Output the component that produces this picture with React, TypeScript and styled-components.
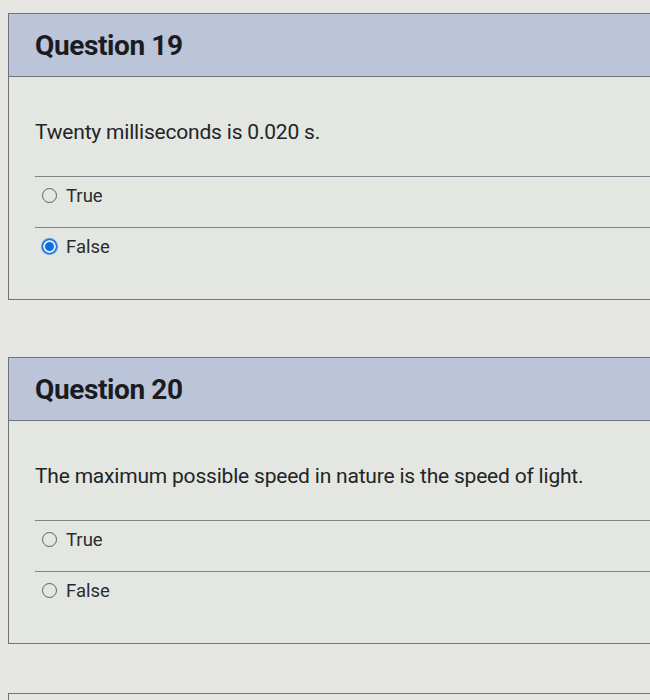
import React from "react";
import styled, { createGlobalStyle } from "styled-components";

const Global = createGlobalStyle`
  html, body {
    margin: 0;
    padding: 0;
    background: #e6e7e2;
    overflow: hidden;
  }
  body {
    font-family: Roboto, "Liberation Sans", Arial, sans-serif;
    color: #1f2124;
  }
`;

const Page = styled.div`
  width: 650px;
  height: 700px;
  padding-top: 13px;
  box-sizing: border-box;
  display: flex;
  flex-direction: column;
  gap: 57px;
`;

const Card = styled.section`
  margin-left: 8px;
  width: 660px;
  flex-shrink: 0;
  border: 1px solid #6f737b;
  border-right: none;
  background: #e4e6e1;
`;

/* Top edge of the following question, only just in view */
const NextCard = styled(Card)`
  margin-top: -8px;
  height: 40px;
`;

const Header = styled.header`
  height: 62px;
  display: flex;
  align-items: center;
  padding-left: 26px;
  background: #bcc4d9;
  border-bottom: 1px solid #6f737b;
`;

const Title = styled.h2`
  margin: 0;
  font-size: 28px;
  font-weight: 700;
  letter-spacing: -0.4px;
  color: #1b1c1f;
`;

const Body = styled.div`
  padding: 43px 0 21px 26px;
`;

const Prompt = styled.p`
  margin: 0 0 32px 0;
  font-size: 21px;
  line-height: 24px;
  letter-spacing: -0.2px;
  color: #222427;
`;

const Options = styled.div`
  display: flex;
  flex-direction: column;
`;

const Option = styled.label`
  display: flex;
  align-items: center;
  gap: 9px;
  height: 51px;
  padding: 0 0 13px 7px;
  box-sizing: border-box;
  border-top: 1px solid #7f848b;
  font-size: 18.5px;
  color: #2a2c30;
`;

const Radio = styled.span<{ $checked?: boolean }>`
  width: 15px;
  height: 15px;
  box-sizing: border-box;
  border-radius: 50%;
  border: 1.5px solid ${(p) => (p.$checked ? "#1a73e8" : "#5d6168")};
  background: ${(p) => (p.$checked ? "#0d6ee0" : "transparent")};
  box-shadow: ${(p) =>
    p.$checked ? "inset 0 0 0 2px #e4ecf6, 0 0 0 1px #5b95dd" : "none"};
  flex-shrink: 0;
`;

type Question = {
  n: number;
  text: string;
  answer: "True" | "False" | null;
};

const questions: Question[] = [
  { n: 19, text: "Twenty milliseconds is 0.020 s.", answer: "False" },
  {
    n: 20,
    text: "The maximum possible speed in nature is the speed of light.",
    answer: null,
  },
];

export default function App() {
  return (
    <>
      <Global />
      <Page>
        {questions.map((q) => (
          <Card key={q.n}>
            <Header>
              <Title>Question {q.n}</Title>
            </Header>
            <Body>
              <Prompt>{q.text}</Prompt>
              <Options>
                {(["True", "False"] as const).map((opt) => (
                  <Option key={opt}>
                    <Radio $checked={q.answer === opt} />
                    {opt}
                  </Option>
                ))}
              </Options>
            </Body>
          </Card>
        ))}
        <NextCard />
      </Page>
    </>
  );
}
